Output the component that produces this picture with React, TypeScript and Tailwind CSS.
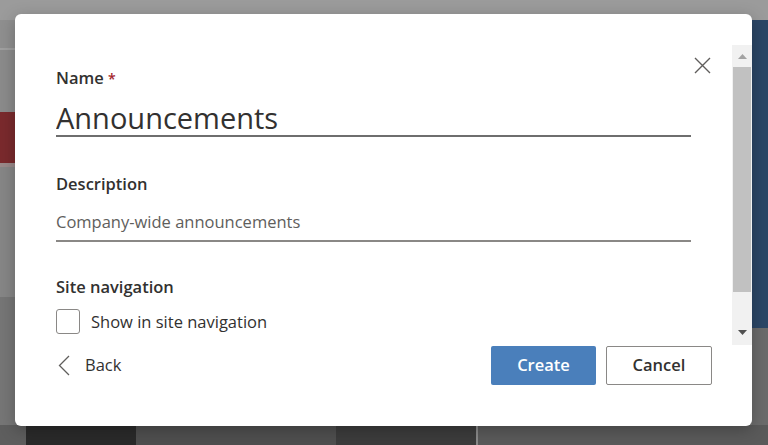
import { useState } from "react";

export default function App() {
    const [name, setName] = useState("Announcements");
    const [description, setDescription] = useState("Company-wide announcements");
    const [showInNav, setShowInNav] = useState(false);

    return (
        <div
            className="relative w-[768px] h-[445px] overflow-hidden bg-[#8a8a8a]"
            style={{ fontFamily: '"Open Sans", "Noto Sans", sans-serif' }}
        >
            {/* dimmed page behind the dialog */}
            <div className="flex flex-col h-full">
                <div className="h-[20px] bg-[#9b9b9b]" />
                <div className="flex flex-1">
                    <div className="flex flex-col flex-1">
                        <div className="h-[28px] bg-[#8f8f8f]" />
                        <div className="h-[2px] bg-[#a0a0a0]" />
                        <div className="h-[62px] bg-[#8b8b8b]" />
                        <div className="h-[51px] bg-[#7a2a2d]" />
                        <div className="h-[4px] bg-[#9a8a8a]" />
                        <div className="h-[130px] bg-[#868686]" />
                        <div className="flex-1 bg-[#767676]" />
                    </div>
                    <div className="flex flex-col w-[16px]">
                        <div className="h-[308px] bg-[#2b4666]" />
                        <div className="flex-1 bg-[#6b6b6b]" />
                    </div>
                </div>
                <div className="flex h-[20px]">
                    <div className="w-[26px] bg-[#5e5e5e]" />
                    <div className="w-[110px] bg-[#2a2a2a]" />
                    <div className="w-[200px] bg-[#4f4f4f]" />
                    <div className="w-[140px] bg-[#3c3c3c]" />
                    <div className="w-[2px] bg-[#8a8a8a]" />
                    <div className="flex-1 bg-[#5a5a5a]" />
                </div>
            </div>

            {/* dialog */}
            <div className="absolute left-[15px] top-[14px] w-[737px] h-[412px] bg-white rounded-md shadow-[0_4px_16px_rgba(0,0,0,0.25)] flex flex-col">
                <button className="absolute left-[677px] top-[41px] w-[20px] h-[20px] flex items-center justify-center">
                    <svg width="17" height="17" viewBox="0 0 17 17" fill="none" stroke="#605e5c" strokeWidth="1.4">
                        <path d="M1 1 L16 16 M16 1 L1 16" />
                    </svg>
                </button>

                <div className="h-[31px]" />

                <div className="flex h-[300px]">
                    <div className="flex-1 pl-[41px] pr-[41px] pt-[22px] text-[#323130]">
                        <label className="block text-[16.5px] leading-[22px] font-semibold">
                            Name <span className="text-[#a4262c] text-[14px]">*</span>
                        </label>
                        <input
                            value={name}
                            onChange={(e) => setName(e.target.value)}
                            className="mt-[11px] block w-full h-[36px] text-[29px] leading-[36px] font-medium text-[#323130] border-b-2 border-[#6e6e6e] outline-none"
                        />

                        <label className="block mt-[36px] text-[16.5px] leading-[22px] font-semibold">Description</label>
                        <input
                            value={description}
                            onChange={(e) => setDescription(e.target.value)}
                            className="mt-[16px] block w-full h-[31px] pb-[8px] text-[16.5px] leading-[22px] text-[#605e5c] border-b-2 border-[#8a8886] outline-none"
                        />

                        <div className="mt-[34px] text-[16.5px] leading-[22px] font-semibold">Site navigation</div>
                        <label className="mt-[11px] flex items-center gap-[11px] cursor-pointer">
                            <input
                                type="checkbox"
                                checked={showInNav}
                                onChange={(e) => setShowInNav(e.target.checked)}
                                className="appearance-none w-[24px] h-[25px] border border-[#8a8886] rounded-[3px] bg-white"
                            />
                            <span className="text-[16.5px] leading-[22px] text-[#323130]">Show in site navigation</span>
                        </label>
                    </div>

                    {/* scrollbar */}
                    <div className="w-[20px] flex flex-col bg-[#f1f1f1]">
                        <div className="h-[22px] flex items-center justify-center">
                            <svg width="9" height="5" viewBox="0 0 9 5"><path d="M0 5 L4.5 0 L9 5 Z" fill="#a3a3a3" /></svg>
                        </div>
                        <div className="h-[225px] mx-[1px] bg-[#c1c1c1]" />
                        <div className="flex-1 flex items-end justify-center pb-[10px]">
                            <svg width="9" height="5" viewBox="0 0 9 5"><path d="M0 0 L9 0 L4.5 5 Z" fill="#505050" /></svg>
                        </div>
                    </div>
                </div>

                <div className="flex items-center justify-between pl-[43px] pr-[40px] pt-[1px]">
                    <button className="flex items-center gap-[15px] text-[16.5px] text-[#323130]">
                        <svg width="12" height="21" viewBox="0 0 12 21" fill="none" stroke="#605e5c" strokeWidth="1.3">
                            <path d="M11 1 L1.5 10.5 L11 20" />
                        </svg>
                        Back
                    </button>
                    <div className="flex gap-[10px]">
                        <button className="w-[105px] h-[39px] rounded-[2px] bg-[#4a7fbb] text-white text-[16.5px] font-semibold">
                            Create
                        </button>
                        <button className="w-[106px] h-[39px] rounded-[2px] border border-[#8a8886] bg-white text-[#323130] text-[16.5px] font-semibold">
                            Cancel
                        </button>
                    </div>
                </div>
            </div>
        </div>
    );
}
